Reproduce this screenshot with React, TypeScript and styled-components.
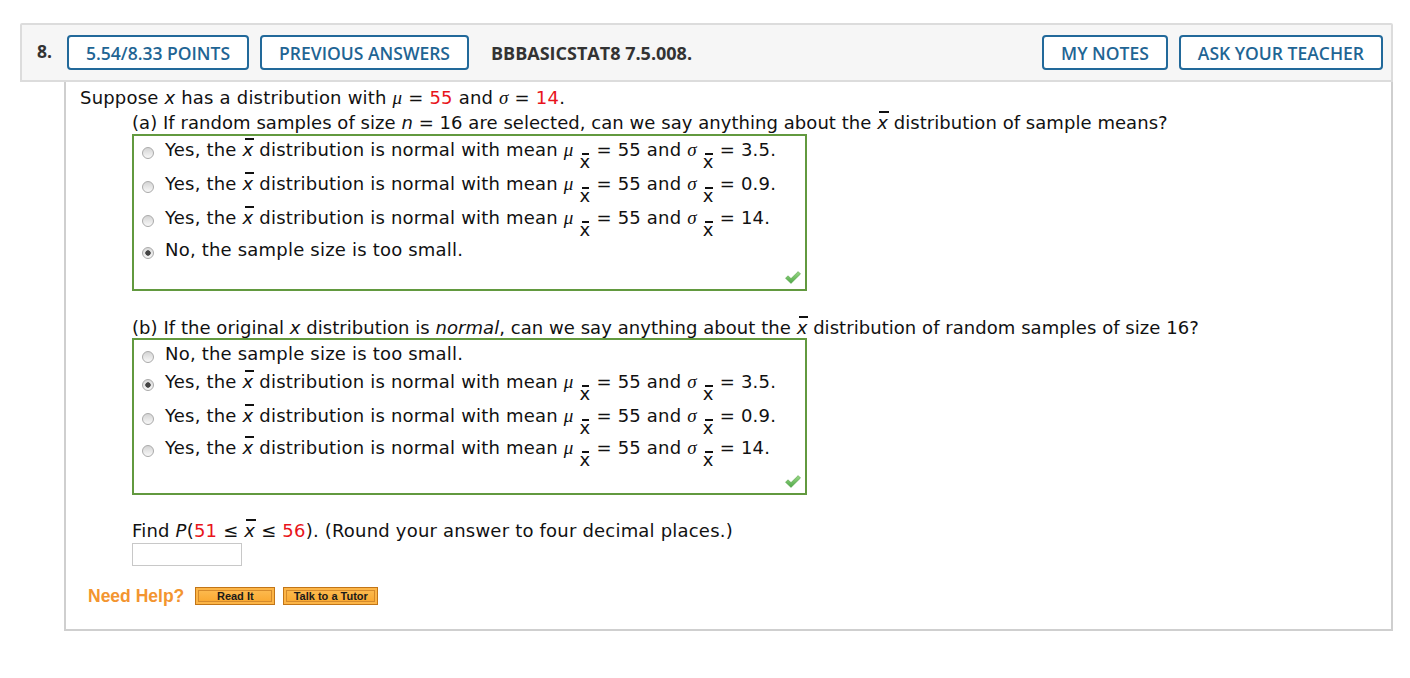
import { FC, ReactNode } from "react";
import styled, { createGlobalStyle } from "styled-components";

const GlobalStyle = createGlobalStyle`
	body {
		margin: 0;
		background: #fff;
		font-family: "DejaVu Sans", Verdana, sans-serif;
		color: #111;
	}
`;

const Page = styled.div`
	padding: 23px 17px 0 20px;
	width: 1373px;
`;

const Header = styled.div`
	display: flex;
	align-items: center;
	height: 59px;
	box-sizing: border-box;
	padding: 0 8px 0 15px;
	background: #f6f6f6;
	border: 2px solid #dcdcdc;
	border-radius: 2px 2px 0 0;
	font-family: "Open Sans", sans-serif;
`;

const QNum = styled.span`
	font-size: 17.5px;
	font-weight: 700;
	color: #333;
	margin: -4px 15px 0 0;
`;

const HeadBtn = styled.button`
	height: 35px;
	padding: 0 17px;
	margin-right: ${(p: { $gap?: number }) => p.$gap ?? 11}px;
	background: #fff;
	border: 2px solid #22699a;
	border-radius: 4px;
	color: #1f6594;
	font-family: "Open Sans", sans-serif;
	font-size: 17.5px;
	font-weight: 600;
	white-space: nowrap;
`;

const Code = styled.span`
	font-size: 18px;
	font-weight: 700;
	color: #333;
	margin-left: 11px;
`;

const Spacer = styled.div`
	flex: 1;
`;

const Body = styled.div`
	margin-left: 44px;
	padding: 6px 14px 23px;
	border: 2px solid #cfcfcf;
	border-top: none;
	font-size: 18px;
	letter-spacing: 0.2px;
	line-height: 20px;
`;

const Line = styled.div<{ $indent?: boolean; $top?: number; $tight?: boolean }>`
	margin-left: ${(p) => (p.$indent ? 52 : 0)}px;
	margin-top: ${(p) => p.$top ?? 0}px;
	letter-spacing: ${(p) => (p.$tight ? 0.05 : 0.2)}px;
	white-space: nowrap;
`;

const Red = styled.span`
	color: #e8141b;
`;

const Greek = styled.span`
	font-family: "Liberation Serif", serif;
	font-style: italic;
	font-size: 19px;
`;

const Ital = styled.i``;

const XBarMain = styled.i`
	display: inline-block;
	position: relative;
	line-height: 16px;
	&::before {
		content: "";
		position: absolute;
		top: -4px;
		left: 2px;
		right: -1px;
		height: 2px;
		background: #111;
	}
`;

const XBarSub = styled.span`
	display: inline-block;
	position: relative;
	line-height: 16px;
	font-size: 18px;
	vertical-align: -12px;
	margin: 0 6px 0 6px;
	&::before {
		content: "";
		position: absolute;
		top: -1px;
		left: 2px;
		right: 1px;
		height: 2px;
		background: #111;
	}
`;

const AnswerBox = styled.div<{ $top?: number }>`
	margin: ${(p) => p.$top ?? 1}px 0 0 52px;
	width: 675px;
	height: 157px;
	box-sizing: border-box;
	border: 2px solid #62993f;
	display: flex;
	flex-direction: column;
	padding-left: 8px;
`;

const OptionRow = styled.div<{ $h: number }>`
	display: flex;
	align-items: flex-start;
	height: ${(p) => p.$h}px;
	line-height: 28px;
	white-space: nowrap;
`;

const Radio = styled.span<{ $checked?: boolean }>`
	flex: none;
	width: 12px;
	height: 12px;
	box-sizing: border-box;
	margin: 11px 11px 0 0;
	border-radius: 50%;
	border: 1px solid #aaa;
	background: ${(p) =>
		p.$checked
			? "radial-gradient(circle, #444 0 2.4px, transparent 3px), linear-gradient(#d9d9d9, #f7f7f7)"
			: "linear-gradient(#d4d4d4, #f8f8f8)"};
`;

const CheckRow = styled.div`
	margin-top: auto;
	display: flex;
	justify-content: flex-end;
	padding: 0 4px 5px 0;
`;

const AnswerInput = styled.input`
	display: block;
	margin: 2px 0 0 52px;
	width: 110px;
	height: 23px;
	box-sizing: border-box;
	border: 1px solid #c8c8c8;
`;

const HelpRow = styled.div`
	display: flex;
	align-items: center;
	gap: 8px;
	margin: 20px 0 0 8px;
`;

const NeedHelp = styled.span`
	font-family: "Liberation Sans", Arial, sans-serif;
	font-weight: 700;
	font-size: 17.5px;
	letter-spacing: 0;
	color: #f39530;
	margin-right: 3px;
`;

const HelpBtn = styled.button<{ $w: number }>`
	width: ${(p) => p.$w}px;
	height: 18px;
	padding: 0;
	background: linear-gradient(#fdbd55, #f9a52b);
	border: 1px solid #c27517;
	box-shadow: inset 0 0 0 2px #fcb547, inset 0 0 0 3px #d58a2b;
	font-family: "Liberation Sans", Arial, sans-serif;
	font-weight: 700;
	font-size: 11px;
	letter-spacing: 0;
	color: #1a1a1a;
	line-height: 15px;
`;

const Check: FC = () => (
	<svg width="16" height="13" viewBox="0 0 16 13">
		<defs>
			<linearGradient id="ck" x1="0" y1="0" x2="0" y2="1">
				<stop offset="0" stopColor="#9ad986" />
				<stop offset="1" stopColor="#4fa848" />
			</linearGradient>
		</defs>
		<path d="M0.5 7.2 L3 4.8 L6 7.6 L13.2 0.6 L15.5 3 L6 12.4 Z" fill="url(#ck)" stroke="#5aa34e" strokeWidth="0.6" />
	</svg>
);

const Mean: FC<{ sd: string }> = ({ sd }) => (
	<>
		Yes, the <XBarMain>x</XBarMain> distribution is normal with mean <Greek>μ</Greek>
		<XBarSub>x</XBarSub>= 55 and <Greek>σ</Greek>
		<XBarSub>x</XBarSub>= {sd}.
	</>
);

interface IOption {
	h: number;
	checked?: boolean;
	children: ReactNode;
}

const Option: FC<IOption> = ({ h, checked, children }) => (
	<OptionRow $h={h}>
		<Radio $checked={checked} />
		<span>{children}</span>
	</OptionRow>
);

const App: FC = () => {
	const partA = [
		{ h: 34, node: <Mean sd="3.5" /> },
		{ h: 34, node: <Mean sd="0.9" /> },
		{ h: 32, node: <Mean sd="14" /> },
		{ h: 28, node: "No, the sample size is too small.", checked: true },
	];
	const partB = [
		{ h: 28, node: "No, the sample size is too small." },
		{ h: 34, node: <Mean sd="3.5" />, checked: true },
		{ h: 32, node: <Mean sd="0.9" /> },
		{ h: 28, node: <Mean sd="14" /> },
	];

	return (
		<Page>
			<GlobalStyle />
			<Header>
				<QNum>8.</QNum>
				<HeadBtn>5.54/8.33 POINTS</HeadBtn>
				<HeadBtn>PREVIOUS ANSWERS</HeadBtn>
				<Code>BBBASICSTAT8 7.5.008.</Code>
				<Spacer />
				<HeadBtn>MY NOTES</HeadBtn>
				<HeadBtn $gap={0}>ASK YOUR TEACHER</HeadBtn>
			</Header>
			<Body>
				<Line>
					Suppose <Ital>x</Ital> has a distribution with <Greek>μ</Greek> = <Red>55</Red> and{" "}
					<Greek>σ</Greek> = <Red>14</Red>.
				</Line>
				<Line $indent $tight $top={5}>
					(a) If random samples of size <Ital>n</Ital> = 16 are selected, can we say anything about the{" "}
					<XBarMain>x</XBarMain> distribution of sample means?
				</Line>
				<AnswerBox>
					{partA.map((o, i) => (
						<Option key={i} h={o.h} checked={o.checked}>
							{o.node}
						</Option>
					))}
					<CheckRow>
						<Check />
					</CheckRow>
				</AnswerBox>
				<Line $indent $tight $top={27}>
					(b) If the original <Ital>x</Ital> distribution is <Ital>normal</Ital>, can we say anything about the{" "}
					<XBarMain>x</XBarMain> distribution of random samples of size 16?
				</Line>
				<AnswerBox $top={0}>
					{partB.map((o, i) => (
						<Option key={i} h={o.h} checked={o.checked}>
							{o.node}
						</Option>
					))}
					<CheckRow>
						<Check />
					</CheckRow>
				</AnswerBox>
				<Line $indent $top={26}>
					Find <Ital>P</Ital>(<Red>51</Red> ≤ <XBarMain>x</XBarMain> ≤ <Red>56</Red>). (Round your answer to four
					decimal places.)
				</Line>
				<AnswerInput type='text' />
				<HelpRow>
					<NeedHelp>Need Help?</NeedHelp>
					<HelpBtn $w={80}>Read It</HelpBtn>
					<HelpBtn $w={95}>Talk to a Tutor</HelpBtn>
				</HelpRow>
			</Body>
		</Page>
	);
};

export default App;
